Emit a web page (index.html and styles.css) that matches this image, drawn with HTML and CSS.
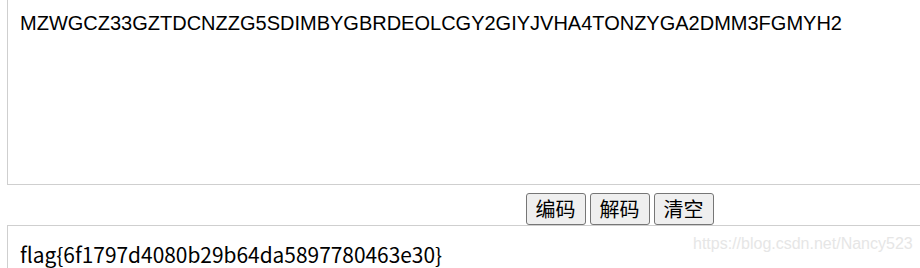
FILE: index.html
```html
<!DOCTYPE html>
<html lang="zh-CN">
<head>
    <meta charset="UTF-8">
    <title>Base32 编码解码</title>
    <link rel="stylesheet" href="styles.css">
</head>
<body>
    <div class="page">
        <div class="box box-input">MZWGCZ33GZTDCNZZG5SDIMBYGBRDEOLCGY2GIYJVHA4TONZYGA2DMM3FGMYH2</div>
        <div class="actions">
            <button type="button">编码</button>
            <button type="button">解码</button>
            <button type="button">清空</button>
        </div>
        <div class="box box-output">flag{6f1797d4080b29b64da5897780463e30}</div>
    </div>
    <span class="watermark">https://blog.csdn.net/Nancy523</span>
</body>
</html>
```

FILE: styles.css
```css
html, body {
  margin: 0;
  padding: 0;
  background: #fff;
  overflow: hidden;
}

body {
  position: relative;
  height: 268px;
}

.page {
  padding-left: 7px;
  width: 1225px;
}

.box {
  border: 1px solid #cfcfcf;
  box-sizing: border-box;
  padding: 8px 12px;
  color: #000;
}

.box-input {
  border-top: 0;
  height: 185px;
  font-family: "Liberation Sans", Arial, sans-serif;
  font-size: 20px;
  line-height: 30px;
}

.box-output {
  height: 43px;
  border-bottom: 0;
  padding-top: 13px;
  font-family: "Noto Sans CJK SC", "Microsoft YaHei", sans-serif;
  font-size: 20.9px;
  line-height: 30px;
  overflow: hidden;
}

.actions {
  text-align: center;
  padding: 8px 0 0;
  height: 32px;
  font-size: 0;
}

.actions button {
  font-family: "Noto Sans CJK SC", sans-serif;
  font-size: 20px;
  height: 32px;
  line-height: 26px;
  padding: 0 9px;
  margin: 0 2px;
  background: #efefef;
  border: 1px solid #767676;
  border-radius: 3px;
  color: #000;
  vertical-align: top;
}

.watermark {
  position: absolute;
  left: 693px;
  top: 235px;
  font-family: "Liberation Sans", Arial, sans-serif;
  font-size: 16px;
  color: #e6e6e6;
}
```
